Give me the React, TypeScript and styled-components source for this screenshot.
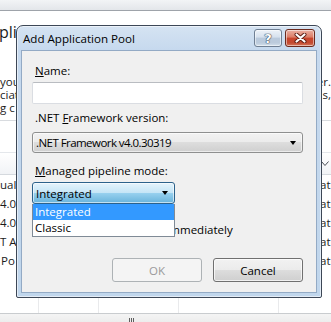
import React from "react";
import styled, { createGlobalStyle } from "styled-components";

const FONT = `"Open Sans", "Noto Sans", "DejaVu Sans", sans-serif`;

const GlobalStyle = createGlobalStyle`
  html, body { margin: 0; padding: 0; background: #fff; }
  body { font-family: ${FONT}; font-size: 11.5px; color: #000; }
  * { box-sizing: border-box; }
`;

const Screen = styled.div`
  position: relative;
  width: 331px;
  height: 322px;
  overflow: hidden;
  background: #fff;
  display: flex;
  flex-direction: column;
`;

const TopBar = styled.div`
  flex: none;
  height: 11px;
  background: linear-gradient(#f2f4f6, #e3e6ea);
  border-bottom: 1px solid #9ea3aa;
`;

const Heading = styled.div`
  flex: none;
  margin-top: 11px;
  margin-left: -21px;
  height: 20px;
  line-height: 20px;
  font-size: 16px;
  color: #1c1c1c;
  white-space: nowrap;
`;

const Description = styled.div`
  flex: none;
  margin-top: 33px;
  display: flex;
  flex-direction: column;
`;

const DescLine = styled.div`
  height: 13px;
  line-height: 13px;
  display: flex;
  justify-content: space-between;
  white-space: nowrap;
  color: #1c1c1c;
`;

const Separator = styled.div`
  flex: none;
  margin-top: 6px;
  height: 1px;
  background: #d8dbdf;
`;

const ToolbarSpace = styled.div`
  flex: none;
  height: 31px;
`;

const ListHeader = styled.div`
  flex: none;
  height: 23px;
  display: flex;
  justify-content: flex-end;
  align-items: flex-start;
  padding-top: 8px;
  padding-right: 2px;
  background: linear-gradient(#ffffff, #f1f3f6);
  border-top: 1px solid #e4e7eb;
  border-bottom: 1px solid #d5d9de;
`;

const ListRow = styled.div`
  flex: none;
  height: 19px;
  line-height: 19px;
  display: flex;
  justify-content: space-between;
  white-space: nowrap;
  color: #1c1c1c;
`;

const LeftCell = styled.span<{ $indent?: number }>`
  padding-left: ${(p) => p.$indent ?? 0}px;
`;

const RightCell = styled.span`
  width: 11px;
  overflow: hidden;
`;

const EmptyArea = styled.div`
  flex: none;
  height: 43px;
  display: flex;
`;

const EmptyColumn = styled.div<{ $w: number }>`
  flex: none;
  width: ${(p) => p.$w}px;
  border-right: 1px solid #e9eaec;
`;

const Scrollbar = styled.div`
  flex: none;
  height: 17px;
  display: flex;
  background: linear-gradient(#f4f4f4, #e6e6e6);
  border-top: 1px solid #c9cccf;
  padding-top: 4px;
`;

const Grip = styled.span`
  margin-left: 129px;
  width: 5px;
  height: 6px;
  background: repeating-linear-gradient(to right, #5e5e5e 0 1px, transparent 1px 2px);
`;

/* ---------- dialog ---------- */

const Dialog = styled.div`
  position: absolute;
  left: 16px;
  top: 25px;
  width: 306px;
  height: 273px;
  display: flex;
  flex-direction: column;
  padding: 0 4px 4px 4px;
  border: 1px solid #3d4756;
  border-radius: 7px 7px 2px 2px;
  background: linear-gradient(to bottom, #d5e3f2 0px, #c6d9ee 24px, #c0d6ec 100%);
  box-shadow: inset 0 0 0 1px rgba(255, 255, 255, 0.55);
`;

const TitleBar = styled.div`
  flex: none;
  height: 24px;
  display: flex;
  align-items: center;
  padding: 0 2px;
`;

const TitleText = styled.span`
  flex: 1;
  font-size: 11.6px;
  color: #000;
  white-space: nowrap;
`;

const CaptionButton = styled.div<{ $w: number; $red?: boolean }>`
  flex: none;
  width: ${(p) => p.$w}px;
  height: 18px;
  margin-left: 3px;
  display: flex;
  align-items: center;
  justify-content: center;
  border-radius: 3px;
  border: 1px solid ${(p) => (p.$red ? "#6b2a1e" : "#6f7f93")};
  background: ${(p) =>
    p.$red
      ? "linear-gradient(#eab0a2 0%, #dc7c66 45%, #c8452c 50%, #c24a31 80%, #d67a5e 100%)"
      : "linear-gradient(#edf2f8 0%, #d6e1ee 45%, #b9c9dc 50%, #bccbdc 80%, #d3e0ec 100%)"};
  box-shadow: inset 0 0 0 1px rgba(255, 255, 255, 0.5);
`;

const HelpGlyph = styled.span`
  font-family: "DejaVu Sans", sans-serif;
  font-weight: bold;
  font-size: 13px;
  line-height: 13px;
  color: #fff;
  text-shadow: 0 0 1px #2a3a4f, 0 0 1px #2a3a4f, 0 0 1px #2a3a4f;
`;

const Client = styled.div`
  flex: 1;
  display: flex;
  flex-direction: column;
  background: #f0f0f0;
  border: 1px solid #93aac5;
  padding: 12px 13px 0 10px;
`;

const FieldLabel = styled.div<{ $gap: number }>`
  margin-top: ${(p) => p.$gap}px;
  margin-left: 3px;
  height: 16px;
  line-height: 16px;
  white-space: nowrap;
  color: #000;
`;

const Key = styled.span`
  text-decoration: underline;
  text-underline-offset: 1px;
`;

const TextBox = styled.div`
  margin-top: 3px;
  height: 22px;
  background: #fff;
  border: 1px solid #dadde2;
  border-top-color: #b9bcc1;
  border-radius: 2px;
`;

const ComboWrap = styled.div<{ $width?: number; $gap: number }>`
  position: relative;
  margin-top: ${(p) => p.$gap}px;
  width: ${(p) => (p.$width ? `${p.$width}px` : "auto")};
`;

const Combo = styled.div<{ $open?: boolean; $h: number }>`
  height: ${(p) => p.$h}px;
  display: flex;
  align-items: center;
  padding: 0 6px 0 3px;
  border-radius: 3px;
  border: 1px solid ${(p) => (p.$open ? "#2c628b" : "#8e8f8f")};
  background: ${(p) =>
    p.$open
      ? "linear-gradient(#e5f4fc 0%, #c4e5f6 50%, #98d1ef 50%, #68b3db 100%)"
      : "linear-gradient(#f2f2f2 0%, #ebebeb 50%, #dddddd 50%, #cfcfcf 100%)"};
  box-shadow: inset 0 0 0 1px rgba(255, 255, 255, 0.6);
`;

const ComboText = styled.span<{ $tight?: boolean }>`
  flex: 1;
  white-space: nowrap;
  color: #000;
  letter-spacing: ${(p) => (p.$tight ? "-0.55px" : "0")};
`;

const Arrow = styled.span`
  width: 0;
  height: 0;
  border-left: 3.5px solid transparent;
  border-right: 3.5px solid transparent;
  border-top: 4px solid #000;
`;

const DropList = styled.div`
  position: absolute;
  left: 0;
  right: 0;
  top: 100%;
  z-index: 2;
  display: flex;
  flex-direction: column;
  background: #fff;
  border: 1px solid #7f8a96;
  border-top: none;
`;

const DropItem = styled.div<{ $selected?: boolean }>`
  height: 16px;
  line-height: 16px;
  padding-left: 2px;
  background: ${(p) => (p.$selected ? "#3399ff" : "#fff")};
  color: ${(p) => (p.$selected ? "#fff" : "#000")};
`;

const CheckRow = styled.div`
  margin-top: 17px;
  margin-left: 2px;
  height: 16px;
  display: flex;
  align-items: center;
  white-space: nowrap;
`;

const CheckBox = styled.span`
  width: 13px;
  height: 13px;
  background: linear-gradient(135deg, #dcdcdc, #ffffff);
  border: 1px solid #8e8f8f;
  margin-right: 2px;
`;

const ButtonRow = styled.div`
  margin-top: 21px;
  display: flex;
  justify-content: flex-end;
  gap: 11px;
`;

const PushButton = styled.div<{ $disabled?: boolean }>`
  width: 90px;
  height: 24px;
  display: flex;
  align-items: center;
  justify-content: center;
  border-radius: 3px;
  border: 1px solid ${(p) => (p.$disabled ? "#adb2b5" : "#707070")};
  color: ${(p) => (p.$disabled ? "#9a9a9a" : "#000")};
  background: ${(p) =>
    p.$disabled
      ? "#f4f4f4"
      : "linear-gradient(#f2f2f2 0%, #ebebeb 50%, #dddddd 50%, #cfcfcf 100%)"};
  box-shadow: ${(p) => (p.$disabled ? "none" : "inset 0 0 0 1px rgba(255,255,255,0.7)")};
`;

function CloseGlyph() {
  return (
    <svg width="13" height="10" viewBox="0 0 13 10">
      <path d="M2.5 1.5 L10.5 8.5 M10.5 1.5 L2.5 8.5" stroke="#5a1c12" strokeWidth="4" strokeLinecap="round" />
      <path d="M2.5 1.5 L10.5 8.5 M10.5 1.5 L2.5 8.5" stroke="#ffffff" strokeWidth="2.2" strokeLinecap="round" />
    </svg>
  );
}

function SortChevron() {
  return (
    <svg width="8" height="5" viewBox="0 0 8 5">
      <path d="M0.5 0.5 L4 4.5 L7.5 0.5" fill="none" stroke="#4a4f57" strokeWidth="1" />
    </svg>
  );
}

const rows: [string, string, number][] = [
  ["ual", "ationPoolIdentity", 0],
  ["4.0", "ationPoolIdentity", 0],
  ["4.0", "ationPoolIdentity", 0],
  ["T A", "ationPoolIdentity", 0],
  ["Po", "ationPoolIdentity", 1],
];

export default function App() {
  return (
    <>
      <GlobalStyle />
      <Screen>
        <TopBar />
        <Heading>Application Pools</Heading>
        <Description>
          <DescLine>
            <span>you</span>
            <span>er.</span>
          </DescLine>
          <DescLine>
            <span>ciat</span>
            <span>s,</span>
          </DescLine>
          <DescLine>
            <span>g c</span>
            <span />
          </DescLine>
        </Description>
        <Separator />
        <ToolbarSpace />
        <ListHeader>
          <SortChevron />
        </ListHeader>
        {rows.map(([l, r, indent], i) => (
          <ListRow key={i}>
            <LeftCell $indent={indent}>{l}</LeftCell>
            <RightCell>{r}</RightCell>
          </ListRow>
        ))}
        <EmptyArea>
          <EmptyColumn $w={39} />
          <EmptyColumn $w={60} />
          <EmptyColumn $w={80} />
          <EmptyColumn $w={100} />
        </EmptyArea>
        <Scrollbar>
          <Grip />
        </Scrollbar>

        <Dialog>
          <TitleBar>
            <TitleText>Add Application Pool</TitleText>
            <CaptionButton $w={28}>
              <HelpGlyph>?</HelpGlyph>
            </CaptionButton>
            <CaptionButton $w={30} $red>
              <CloseGlyph />
            </CaptionButton>
          </TitleBar>
          <Client>
            <FieldLabel $gap={0}>
              <Key>N</Key>ame:
            </FieldLabel>
            <TextBox />
            <FieldLabel $gap={6}>
              .NET <Key>F</Key>ramework version:
            </FieldLabel>
            <ComboWrap $gap={6}>
              <Combo $h={21}>
                <ComboText $tight>.NET Framework v4.0.30319</ComboText>
                <Arrow />
              </Combo>
            </ComboWrap>
            <FieldLabel $gap={10}>
              <Key>M</Key>anaged pipeline mode:
            </FieldLabel>
            <ComboWrap $gap={3} $width={143}>
              <Combo $open $h={22}>
                <ComboText>Integrated</ComboText>
                <Arrow />
              </Combo>
              <DropList>
                <DropItem $selected>Integrated</DropItem>
                <DropItem>Classic</DropItem>
              </DropList>
            </ComboWrap>
            <CheckRow>
              <CheckBox />
              Start application pool immediately
            </CheckRow>
            <ButtonRow>
              <PushButton $disabled>OK</PushButton>
              <PushButton>Cancel</PushButton>
            </ButtonRow>
          </Client>
        </Dialog>
      </Screen>
    </>
  );
}
